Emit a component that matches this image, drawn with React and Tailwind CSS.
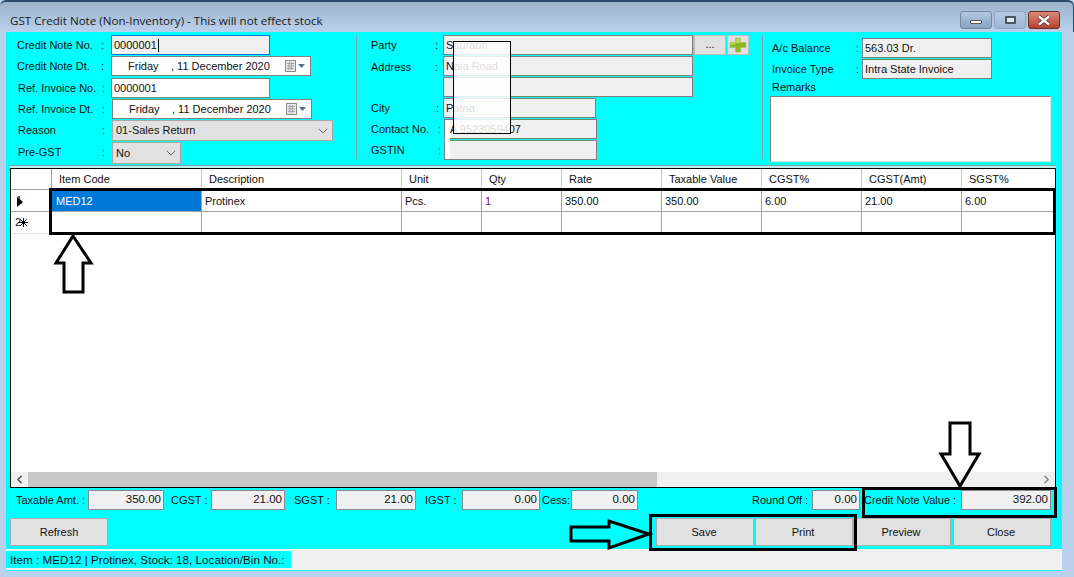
import { ChevronDown, ChevronLeft, ChevronRight } from "lucide-react";

const columns = [
  { name: "Item Code", w: "w-[150px]" },
  { name: "Description", w: "w-[200px]" },
  { name: "Unit", w: "w-[80px]" },
  { name: "Qty", w: "w-[80px]" },
  { name: "Rate", w: "w-[100px]" },
  { name: "Taxable Value", w: "w-[100px]" },
  { name: "CGST%", w: "w-[100px]" },
  { name: "CGST(Amt)", w: "w-[100px]" },
  { name: "SGST%", w: "w-[93px]" },
];

const firstRow = [
  { text: "MED12", cls: "bg-[#0078d7] text-white pl-[4px]" },
  { text: "Protinex", cls: "pl-[3px]" },
  { text: "Pcs.", cls: "pl-[3px]" },
  { text: "1", cls: "pl-[3px] text-[#800080]" },
  { text: "350.00", cls: "pl-[3px]" },
  { text: "350.00", cls: "pl-[3px]" },
  { text: "6.00", cls: "pl-[3px]" },
  { text: "21.00", cls: "pl-[3px]" },
  { text: "6.00", cls: "pl-[3px]" },
];

function Box({ children, className = "" }) {
  return (
    <div className={`flex h-[20px] items-center whitespace-nowrap border border-[#7f7f7f] bg-[#f0f0f0] pl-[2px] leading-none ${className}`}>
      {children}
    </div>
  );
}

function Amount({ children, className = "" }) {
  return (
    <div className={`flex h-[20px] shrink-0 items-center justify-end border border-[#8a8a8a] bg-[#f0f0f0] pr-[2px] text-[11.5px] leading-none ${className}`}>
      {children}
    </div>
  );
}

function Label({ children, colon, className = "" }) {
  return (
    <div className={`flex shrink-0 items-center whitespace-nowrap ${className}`}>
      <span>{children}</span>
      <span className={`ml-auto ${colon}`}>:</span>
    </div>
  );
}

function DatePick({ className = "" }) {
  return (
    <div className={`flex h-[20px] w-[200px] items-center border border-[#7f7f7f] bg-white pl-[16px] pr-[5px] ${className}`}>
      <span className="w-[43px]">Friday</span>
      <span>, 11 December 2020</span>
      <svg className="ml-auto" width="21" height="14" viewBox="0 0 21 14">
        <rect x="1.500" y="1.500" width="10" height="11" fill="#e8e8e8" stroke="#8d8d8d" />
        <path d="M3 4.500h7M3 7h7M3 9.500h7M5 3v8M7.500 3v8" stroke="#a5a5a5" strokeWidth="1" />
        <path d="M14 5h7l-3.500 4z" fill="#5b6b80" />
      </svg>
    </div>
  );
}

function Combo({ children, className = "" }) {
  return (
    <div className={`flex items-center justify-between border border-[#a8a8a8] bg-[#e1e1e1] pl-[3px] pr-[1px] ${className}`}>
      <span>{children}</span>
      <ChevronDown size={16} strokeWidth={1} className="text-[#333]" />
    </div>
  );
}

function Btn({ children, className = "" }) {
  return (
    <div className={`flex h-[28px] w-[98px] shrink-0 items-center justify-center border border-[#adadad] bg-[#e1e1e1] ${className}`}>
      {children}
    </div>
  );
}

function WinButton({ className = "", children }) {
  return (
    <div className={`flex h-[18px] w-[32px] items-center justify-center rounded-[3px] border ${className}`}>
      {children}
    </div>
  );
}

export default function App() {
  return (
    <div className="relative flex h-[577px] w-[1074px] flex-col overflow-hidden bg-[#b9d1ea] font-['Liberation_Sans',sans-serif] text-[11px] text-[#111]">
      {/* title bar */}
      <div className="flex h-[32px] shrink-0 items-start rounded-t-[6px] border-r border-t-2 border-[#2b4a6b] bg-gradient-to-b from-[#9cb3cd] to-[#b9d1ea] pl-[10px]">
        <span className="mt-[11px] font-['Open_Sans',sans-serif] text-[11.6px] leading-[16px] text-[#1a1a1a]">GST Credit Note (Non-Inventory) - This will not effect stock</span>
        <div className="ml-auto mr-[13px] mt-[9px] flex gap-[2px]">
          <WinButton className="border-[#6f89a6] bg-gradient-to-b from-[#b4c9e0] to-[#86a3c2]">
            <div className="mt-[4px] h-[4px] w-[12px] rounded-[1px] border border-[#555] bg-white" />
          </WinButton>
          <WinButton className="border-[#8ea7c3] bg-gradient-to-b from-[#b5cbe2] to-[#9db7d3]">
            <div className="flex h-[8px] w-[11px] items-center justify-center rounded-[1px] border-2 border-[#4a5560] bg-[#dfe8f2]" />
          </WinButton>
          <WinButton className="border-[#6e2a20] bg-gradient-to-b from-[#d9897a] to-[#b5402c]">
            <svg width="16" height="11" viewBox="0 0 16 11">
              <path d="M3 1.500l10 8M13 1.500l-10 8" stroke="#4a2a26" strokeWidth="3.800" />
              <path d="M3 1.500l10 8M13 1.500l-10 8" stroke="#fff" strokeWidth="2.400" />
            </svg>
          </WinButton>
        </div>
      </div>

      {/* client area */}
      <div className="ml-[6px] mr-[12px] flex h-[539px] shrink-0 flex-col bg-[#00ffff]">
        {/* form */}
        <div className="flex h-[133px] shrink-0">
          <div className="flex w-[350px] shrink-0 flex-col pl-[11px] pt-[3px]">
            <div className="flex h-[20px]">
              <Label colon="mr-[7px]" className="w-[94px]">Credit Note No.</Label>
              <div className="flex h-[20px] w-[159px] items-center border border-[#0078d7] bg-[#f0f0f0] pl-[2px]">
                0000001<span className="ml-px h-[13px] w-px bg-black" />
              </div>
            </div>
            <div className="mt-[1px] flex h-[20px]">
              <Label colon="mr-[7px]" className="w-[94px]">Credit Note Dt.</Label>
              <DatePick />
            </div>
            <div className="mt-[2px] flex h-[20px]">
              <Label colon="mr-[6px]" className="w-[94px] pl-px">Ref. Invoice No.</Label>
              <div className="flex h-[20px] w-[159px] items-center border border-[#7f7f7f] bg-white pl-[2px]">0000001</div>
            </div>
            <div className="mt-[1px] flex h-[20px]">
              <Label colon="mr-[7px]" className="w-[95px] pl-[1px]">Ref. Invoice Dt.</Label>
              <DatePick />
            </div>
            <div className="mt-[1px] flex h-[21px]">
              <Label colon="mr-[7px]" className="w-[95px] pb-[1px] pl-[1px]">Reason</Label>
              <Combo className="w-[221px]">01-Sales Return</Combo>
            </div>
            <div className="mt-[1px] flex h-[22px]">
              <Label colon="mr-[7px]" className="w-[95px] pb-[2px] pl-[1px]">Pre-GST</Label>
              <Combo className="w-[69px]">No</Combo>
            </div>
          </div>

          <div className="mb-[6px] mt-[3px] w-px shrink-0 border-l border-[#7fa7a7] bg-[#bfeeee]" />

          <div className="relative flex w-[405px] shrink-0 flex-col pl-[14px] pt-[3px]">
            <div className="flex h-[20px]">
              <Label colon="mr-[5px]" className="w-[72px]">Party</Label>
              <Box className="w-[250px]">Saurabh</Box>
              <div className="ml-px flex h-[20px] w-[32px] items-center justify-center border border-[#bdbdbd] bg-[#e1e1e1] pb-[2px]">...</div>
              <div className="ml-px flex h-[20px] w-[22px] items-center justify-center border border-[#bdbdbd] bg-[#e1e1e1]">
                <svg width="18" height="16" viewBox="0 0 18 16">
                  <path d="M6.500 1h5v4.500H17v5h-5.500V15h-5v-4.500H1v-5h5.500z" fill="#8cb923" stroke="#a5b96c" strokeWidth="0.600" />
                  <path d="M7 1.500h4v4.500H7zM1.500 6h5v1.500h-5z" fill="#b7d84f" />
                </svg>
              </div>
            </div>
            <div className="mt-[1px] flex h-[20px]">
              <Label colon="mr-[5px]" className="w-[72px] pt-[3px]">Address</Label>
              <Box className="w-[250px]">Naia Road</Box>
            </div>
            <div className="mt-[1px] flex h-[20px]">
              <div className="w-[72px] shrink-0" />
              <Box className="w-[250px]" />
            </div>
            <div className="mt-[1px] flex h-[20px]">
              <Label colon="mr-[4px]" className="w-[72px]">City</Label>
              <Box className="w-[153px]">Patna</Box>
            </div>
            <div className="mt-[1px] flex h-[20px]">
              <Label colon="mr-[3px]" className="w-[73px]">Contact No.</Label>
              <Box className="w-[153px] pl-[5px]">A 9523059407</Box>
            </div>
            <div className="mt-[1px] flex h-[20px]">
              <Label colon="mr-[3px]" className="w-[73px]">GSTIN</Label>
              <Box className="w-[153px]" />
            </div>
            {/* masked details pasted over the fields */}
            <div className="absolute left-[88px] top-[88px] h-[39px] w-[5px] bg-white" />
            <div className="absolute left-[96px] top-[9px] h-[93px] w-[58px] border border-black bg-white/85" />
          </div>

          <div className="mb-[6px] mt-[3px] w-px shrink-0 border-l border-[#7fa7a7] bg-[#bfeeee]" />

          <div className="flex min-w-0 flex-1 flex-col pl-[7px] pt-[6px]">
            <div className="flex h-[20px]">
              <Label colon="mr-[3px]" className="w-[92px] pl-[2px]">A/c Balance</Label>
              <Box className="w-[130px]">563.03 Dr.</Box>
            </div>
            <div className="mt-[1px] flex h-[20px]">
              <Label colon="mr-[3px]" className="w-[92px] pl-[2px]">Invoice Type</Label>
              <Box className="w-[130px]">Intra State Invoice</Box>
            </div>
            <div className="mt-[1px] flex h-[16px] items-center pb-[2px] pl-[2px]">Remarks</div>
            <div className="h-[66px] w-[281px] border border-[#7f7f7f] border-b-[#e5e5e5] border-r-[#e5e5e5] bg-white" />
          </div>
        </div>

        <div className="ml-[4px] mr-[6px] h-[3px] shrink-0 border-t border-[#7fa7a7] bg-[#bfeeee]" />

        {/* grid */}
        <div className="ml-[4px] mr-[6px] flex h-[320px] shrink-0 flex-col border border-black bg-white">
          <div className="flex h-[21px] shrink-0 border-b border-[#a0a0a0]">
            <div className="w-[41px] shrink-0 border-r border-[#a0a0a0]" />
            {columns.map((c) => (
              <div key={c.name} className={`${c.w} flex shrink-0 items-center border-r border-[#c8c8c8] pl-[7px] pt-px last:border-r-0`}>
                {c.name}
              </div>
            ))}
          </div>
          <div className="flex h-[22px] shrink-0 border-b border-[#a0a0a0]">
            <div className="relative flex w-[41px] shrink-0 items-center border-r border-[#a0a0a0] pl-[5px]">
              <span>1</span>
              <svg className="absolute left-[6px] top-[7px]" width="7" height="10" viewBox="0 0 7 10"><path d="M0 0l6 5-6 5z" fill="#000" /></svg>
            </div>
            {firstRow.map((c, i) => (
              <div key={i} className={`${columns[i].w} flex shrink-0 items-center border-r border-[#a0a0a0] pt-px last:border-r-0 ${c.cls}`}>
                {c.text}
              </div>
            ))}
          </div>
          <div className="flex h-[22px] shrink-0 border-b border-[#e4e4e4]">
            <div className="relative flex w-[41px] shrink-0 items-center border-r border-[#a0a0a0] pl-[4px]">
              <span>2</span>
              <svg className="absolute left-[8px] top-[6px]" width="9" height="9" viewBox="0 0 9 9">
                <path d="M4.500 0v9M0 4.500h9M1.300 1.300l6.400 6.400M7.700 1.300l-6.400 6.400" stroke="#000" strokeWidth="1" />
              </svg>
            </div>
            {columns.map((c) => (
              <div key={c.name} className={`${c.w} shrink-0 border-r border-[#a0a0a0] last:border-r-0`} />
            ))}
          </div>
          <div className="flex-1" />
          <div className="flex h-[15px] shrink-0 bg-[#f0f0f0]">
            <div className="flex w-[17px] shrink-0 items-center justify-center">
              <ChevronLeft size={13} strokeWidth={3} className="text-[#555]" />
            </div>
            <div className="w-[629px] shrink-0 bg-[#c8c8c8]" />
            <div className="ml-auto flex w-[17px] shrink-0 items-center justify-center">
              <ChevronRight size={13} strokeWidth={3} className="text-[#888]" />
            </div>
          </div>
        </div>

        {/* totals */}
        <div className="mt-[2px] flex h-[20px] shrink-0 items-center whitespace-nowrap">
          <span className="ml-[10px] w-[72px] shrink-0">Taxable Amt. :</span>
          <Amount className="w-[76px]">350.00</Amount>
          <span className="ml-[7px] w-[40px] shrink-0">CGST :</span>
          <Amount className="w-[74px]">21.00</Amount>
          <span className="ml-[9px] w-[42px] shrink-0">SGST :</span>
          <Amount className="w-[80px]">21.00</Amount>
          <span className="ml-[9px] w-[37px] shrink-0">IGST :</span>
          <Amount className="w-[78px]">0.00</Amount>
          <span className="ml-[2px] w-[29px] shrink-0">Cess:</span>
          <Amount className="w-[67px]">0.00</Amount>
          <span className="ml-auto w-[60px] shrink-0">Round Off :</span>
          <Amount className="w-[48px]">0.00</Amount>
          <span className="ml-[4px] w-[97px] shrink-0">Credit Note Value :</span>
          <Amount className="mr-[11px] w-[90px]">392.00</Amount>
        </div>

        {/* buttons */}
        <div className="mt-[8px] flex h-[28px] shrink-0">
          <Btn className="ml-[4px] w-[97px]">Refresh</Btn>
          <Btn className="ml-[548px] pr-[2px]">Save</Btn>
          <Btn className="ml-px pr-[2px]">Print</Btn>
          <Btn className="pr-[2px]">Preview</Btn>
          <Btn className="ml-[2px] pr-[2px]">Close</Btn>
        </div>

        {/* status strip */}
        <div className="mt-[3px] flex h-[21px] shrink-0 items-center bg-[#f0f0f0]">
          <div className="flex h-[17px] w-[285px] items-center whitespace-nowrap bg-[#00ffff] pl-[4px] text-[11.700px]">Item : MED12 | Protinex, Stock: 18, Location/Bin No.:</div>
        </div>
      </div>

      {/* hand drawn marks on the screenshot */}
      <div className="pointer-events-none absolute left-[49px] top-[188px] h-[47px] w-[1007px] border-[3px] border-black" />
      <div className="pointer-events-none absolute left-[862px] top-[487px] h-[31px] w-[195px] border-[3px] border-black" />
      <div className="pointer-events-none absolute left-[649px] top-[514px] h-[37px] w-[208px] border-[3px] border-black" />
      <svg className="pointer-events-none absolute left-0 top-0" width="1074" height="577" viewBox="0 0 1074 577" fill="none" stroke="#000" strokeWidth="3">
        <path d="M73 236L56 263H64V292H83V263H91Z" />
        <path d="M950 423H970V454H979L960 486L941 454H950Z" />
        <path d="M571 527H609V521L649 534L609 548V541H571Z" />
      </svg>
    </div>
  );
}
